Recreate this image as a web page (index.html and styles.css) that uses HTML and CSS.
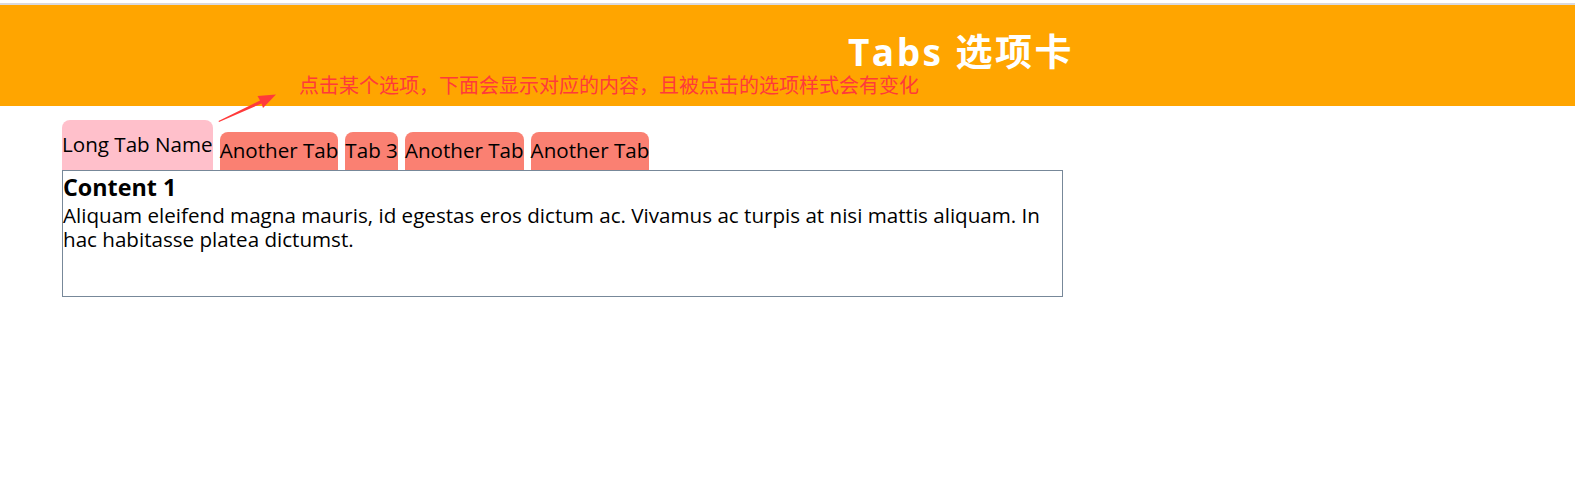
FILE: index.html
```html
<!DOCTYPE html>
<html lang="zh-CN">
<head>
<meta charset="utf-8">
<title>Tabs 选项卡</title>
<link rel="stylesheet" href="styles.css">
</head>
<body>
<div class="topline"></div>
<header class="header">
  <h1 class="title">Tabs 选项卡</h1>
</header>
<p class="note">点击某个选项，下面会显示对应的内容，且被点击的选项样式会有变化</p>
<svg class="arrow" width="300" height="130" viewBox="0 0 300 130" aria-hidden="true">
  <polygon points="219,122 218.5,121 260,100.5 257.5,96 276,94.5 263,108 261.5,103.5" fill="#ff3a3a"/>
</svg>
<main class="tabs-wrap">
  <div class="tabs">
    <div class="tab active">Long Tab Name</div>
    <div class="tab">Another Tab</div>
    <div class="tab">Tab 3</div>
    <div class="tab">Another Tab</div>
    <div class="tab">Another Tab</div>
  </div>
  <section class="panel">
    <h2 class="panel-title">Content 1</h2>
    <p class="panel-text">Aliquam eleifend magna mauris, id egestas eros dictum ac. Vivamus ac turpis at nisi mattis aliquam. In hac habitasse platea dictumst.</p>
  </section>
</main>
</body>
</html>
```

FILE: styles.css
```css
html, body {
  margin: 0;
  padding: 0;
  background: #ffffff;
}

body {
  font-family: "Open Sans", "Noto Sans CJK SC", sans-serif;
  color: #000000;
  position: relative;
}

.topline {
  height: 2px;
  margin-top: 3px;
  background: #d9d9de;
}

.header {
  height: 101px;
  background: #ffa500;
  box-sizing: border-box;
  padding-left: 347px;
  padding-top: 27px;
  text-align: center;
}

.title {
  margin: 0;
  font-family: "Open Sans", "Noto Sans CJK SC", sans-serif;
  font-weight: 700;
  font-size: 37px;
  line-height: 40px;
  letter-spacing: 2.5px;
  color: #ffffff;
}

.note {
  position: absolute;
  left: 299px;
  top: 75px;
  margin: 0;
  font-family: "Noto Sans CJK SC", sans-serif;
  font-size: 20px;
  line-height: 20px;
  color: #ff3a3a;
  white-space: nowrap;
}

.arrow {
  position: absolute;
  left: 0;
  top: 0;
  pointer-events: none;
}

.tabs-wrap {
  margin: 14px 0 0 62px;
}

.tabs {
  display: flex;
  align-items: flex-end;
  gap: 7px;
}

.tab {
  box-sizing: border-box;
  height: 38px;
  padding-top: 6px;
  font-size: 20.6px;
  line-height: 24px;
  background: #fa8072;
  border-radius: 8px 8px 0 0;
  white-space: nowrap;
}

.tab.active {
  height: 50px;
  padding-top: 12px;
  background: #ffc0cb;
}

.panel {
  box-sizing: border-box;
  width: 1001px;
  height: 127px;
  border: 1px solid #778899;
}

.panel-title {
  margin: 0;
  font-size: 23.3px;
  font-weight: 700;
  line-height: 32px;
}

.panel-text {
  margin: 0;
  font-size: 20.6px;
  line-height: 24px;
}
```
